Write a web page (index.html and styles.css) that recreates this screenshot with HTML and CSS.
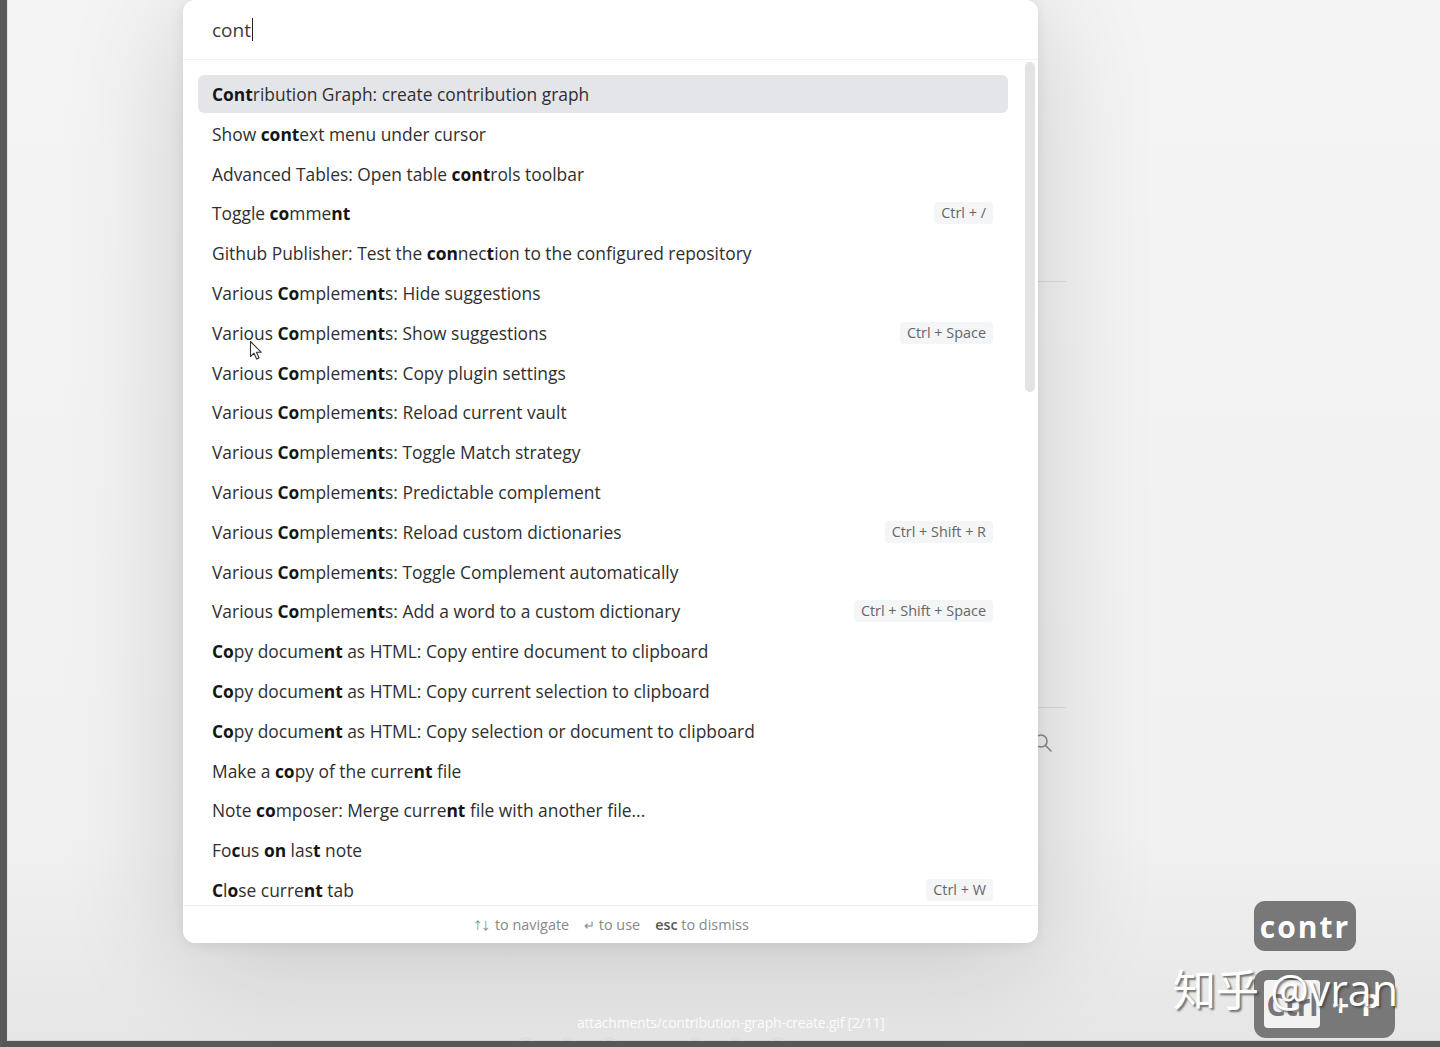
FILE: index.html
```html
<!DOCTYPE html>
<html>
<head>
    <meta charset="utf-8" />
    <title>Command palette</title>
    <link rel="stylesheet" href="styles.css">
</head>
<body>
    <div class="screen">
        <!-- bits of the editor that peek out behind the modal -->
        <div class="bg-rule bg-rule-top"></div>
        <div class="bg-rule bg-rule-bottom"></div>
        <svg class="bg-search" width="24" height="24" viewBox="0 0 24 24">
            <circle cx="10" cy="10" r="6" fill="none" stroke="#8a8a8a" stroke-width="1.6" />
            <line x1="14.5" y1="14.5" x2="20" y2="20" stroke="#8a8a8a" stroke-width="1.6" stroke-linecap="round" />
        </svg>

        <div class="prompt">
            <div class="prompt-input">cont<span class="caret"></span></div>
            <div class="prompt-results">
                <div class="item is-selected"><span><b>Cont</b>ribution Graph: create contribution graph</span></div>
                <div class="item"><span>Show <b>cont</b>ext menu under cursor</span></div>
                <div class="item"><span>Advanced Tables: Open table <b>cont</b>rols toolbar</span></div>
                <div class="item"><span>Toggle <b>co</b>mme<b>nt</b></span><span class="kbd">Ctrl + /</span></div>
                <div class="item"><span>Github Publisher: Test the <b>con</b>nec<b>t</b>ion to the configured repository</span></div>
                <div class="item"><span>Various <b>Co</b>mpleme<b>nt</b>s: Hide suggestions</span></div>
                <div class="item"><span>Various <b>Co</b>mpleme<b>nt</b>s: Show suggestions</span><span class="kbd">Ctrl + Space</span></div>
                <div class="item"><span>Various <b>Co</b>mpleme<b>nt</b>s: Copy plugin settings</span></div>
                <div class="item"><span>Various <b>Co</b>mpleme<b>nt</b>s: Reload current vault</span></div>
                <div class="item"><span>Various <b>Co</b>mpleme<b>nt</b>s: Toggle Match strategy</span></div>
                <div class="item"><span>Various <b>Co</b>mpleme<b>nt</b>s: Predictable complement</span></div>
                <div class="item"><span>Various <b>Co</b>mpleme<b>nt</b>s: Reload custom dictionaries</span><span class="kbd">Ctrl + Shift + R</span></div>
                <div class="item"><span>Various <b>Co</b>mpleme<b>nt</b>s: Toggle Complement automatically</span></div>
                <div class="item"><span>Various <b>Co</b>mpleme<b>nt</b>s: Add a word to a custom dictionary</span><span class="kbd">Ctrl + Shift + Space</span></div>
                <div class="item"><span><b>Co</b>py docume<b>nt</b> as HTML: Copy entire document to clipboard</span></div>
                <div class="item"><span><b>Co</b>py docume<b>nt</b> as HTML: Copy current selection to clipboard</span></div>
                <div class="item"><span><b>Co</b>py docume<b>nt</b> as HTML: Copy selection or document to clipboard</span></div>
                <div class="item"><span>Make a <b>co</b>py of the curre<b>nt</b> file</span></div>
                <div class="item"><span>Note <b>co</b>mposer: Merge curre<b>nt</b> file with another file...</span></div>
                <div class="item"><span>Fo<b>c</b>us <b>on</b> las<b>t</b> note</span></div>
                <div class="item"><span><b>C</b>l<b>o</b>se curre<b>nt</b> tab</span><span class="kbd">Ctrl + W</span></div>
                <div class="scroll-thumb"></div>
            </div>
            <div class="prompt-footer">
                <span><span class="arrows">↑↓</span> to navigate</span>
                <span><span class="enter">↵</span> to use</span>
                <span><span class="esc">esc</span> to dismiss</span>
            </div>
        </div>

        <svg class="pointer" width="16" height="22" viewBox="0 0 16 22">
            <path d="M1.5 1.5 L1.5 16.5 L5 13.2 L7.6 19 L10 18 L7.5 12.3 L12.3 12.3 Z" fill="#fff" stroke="#333" stroke-width="1.1" stroke-linejoin="round" />
        </svg>

        <div class="caption">attachments/contribution-graph-create.gif [2/11]</div>

        <div class="key key-contr">contr</div>
        <div class="key key-combo"><span class="cap">Ctrl</span><span class="plus">+ P</span></div>
        <div class="watermark">知乎 @vran</div>

        <div class="taskbar">
            <span class="tb-icon" style="left: 510px;"></span>
            <span class="tb-icon" style="left: 552px;"></span>
            <span class="tb-icon" style="left: 593px;"></span>
            <span class="tb-icon" style="left: 680px;"></span>
            <span class="tb-icon" style="left: 720px;"></span>
            <span class="tb-icon" style="left: 762px;"></span>
        </div>
    </div>
</body>
</html>
```
FILE: styles.css
```css
body {
    margin: 0;
    width: 1440px;
    height: 1047px;
    overflow: hidden;
    background-color: #f2f2f2;
    font-family: "Open Sans", "Noto Sans CJK SC", sans-serif;
}

.screen {
    position: relative;
    height: 1047px;
    box-sizing: border-box;
    border-left: 7px solid #5a5a5a;
    border-bottom: 6px solid #575757;
    background: linear-gradient(to bottom, #f4f4f4 0%, #f1f1f1 80%, #e6e6e6 100%);
    box-shadow: inset 1px 0 #e2e2e2, inset 0 -1px #d6d6d6;
    overflow: hidden;
}

/* editor behind */
.bg-rule {
    position: absolute;
    left: 1031px;
    width: 28px;
    height: 1px;
    background-color: #dcdcdc;
}

.bg-rule-top {
    top: 281px;
}

.bg-rule-bottom {
    top: 707px;
}

.bg-search {
    position: absolute;
    left: 1024px;
    top: 731px;
}

/* command palette */
.prompt {
    position: absolute;
    left: 176px;
    top: 0;
    width: 855px;
    height: 943px;
    background-color: #fff;
    border-radius: 12px;
    box-shadow: 0 14px 120px rgba(0, 0, 0, 0.16), 0 2px 14px rgba(0, 0, 0, 0.08);
    display: flex;
    flex-direction: column;
    overflow: hidden;
}

.prompt-input {
    height: 59px;
    flex-shrink: 0;
    border-bottom: 1px solid #f2f2f2;
    padding-left: 29px;
    display: flex;
    align-items: center;
    font-size: 19px;
    color: #3c3c3c;
}

.caret {
    display: inline-block;
    width: 1px;
    height: 23px;
    margin-left: 1px;
    background-color: #222;
}

.prompt-results {
    position: relative;
    height: 845px;
    flex-shrink: 0;
    box-sizing: border-box;
    padding: 15px 30px 0 15px;
    overflow: hidden;
}

.item {
    height: 38px;
    margin-bottom: 1.8px;
    padding: 0 15px 0 14px;
    display: flex;
    align-items: center;
    justify-content: space-between;
    border-radius: 6px;
    font-size: 17.4px;
    color: #2f2f2f;
    white-space: nowrap;
}

.item b {
    font-weight: 700;
    color: #151515;
}

.is-selected {
    background-color: #e4e5e9;
}

.kbd {
    font-size: 14.4px;
    line-height: 22px;
    color: #666;
    background-color: #f4f5f7;
    padding: 0 7px;
    border-radius: 4px;
}

.scroll-thumb {
    position: absolute;
    right: 3px;
    top: 2px;
    width: 10px;
    height: 330px;
    border-radius: 5px;
    background-color: #e3e3e3;
}

.prompt-footer {
    flex: 1;
    border-top: 1px solid #efefef;
    display: flex;
    justify-content: center;
    align-items: center;
    gap: 15px;
    font-size: 14.4px;
    color: #888;
}

.arrows {
    font-size: 11px;
    letter-spacing: -3px;
    margin-right: 3px;
}

.enter {
    font-size: 13px;
}

.esc {
    font-weight: 600;
    color: #555;
}

/* overlay bits from the recording */
.pointer {
    position: absolute;
    left: 242px;
    top: 340px;
}

.caption {
    position: absolute;
    left: 570px;
    top: 1013px;
    font-size: 14px;
    letter-spacing: -0.2px;
    color: rgba(255, 255, 255, 0.9);
}

.key {
    position: absolute;
    left: 1247px;
    box-sizing: border-box;
    background-color: #787878;
    color: #fff;
    font-weight: 700;
    display: flex;
    align-items: center;
}

.key-contr {
    top: 901px;
    width: 102px;
    height: 50px;
    border-radius: 11px;
    justify-content: center;
    font-size: 30px;
    letter-spacing: 2px;
}

.key-combo {
    top: 970px;
    width: 141px;
    height: 68px;
    border-radius: 12px;
    padding: 0 10px;
    gap: 12px;
    font-size: 30px;
}

.cap {
    width: 56px;
    height: 48px;
    border-radius: 4px;
    background-color: #f2f2f2;
    color: #777;
    display: flex;
    align-items: center;
    justify-content: center;
    letter-spacing: -1px;
}

.plus {
    word-spacing: 4px;
}

.watermark {
    position: absolute;
    left: 1166px;
    top: 956px;
    font-size: 43px;
    color: #fff;
    white-space: nowrap;
    text-shadow: 2px 2px 2px rgba(60, 60, 60, 0.7);
}

.taskbar {
    position: absolute;
    left: 0;
    right: 0;
    bottom: 0;
    height: 6px;
    overflow: hidden;
}

.tb-icon {
    position: absolute;
    top: 2px;
    width: 14px;
    height: 14px;
    border: 2px solid #ddd;
    border-radius: 50%;
}
```
